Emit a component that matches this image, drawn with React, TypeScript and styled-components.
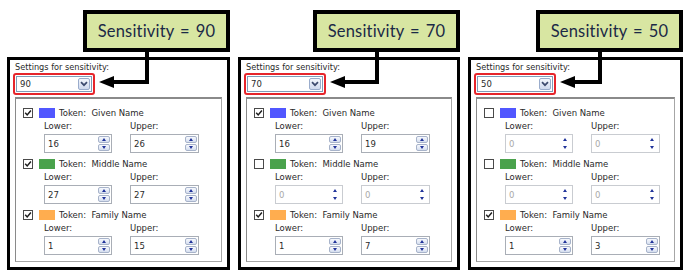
import React from 'react';
import styled, { createGlobalStyle } from 'styled-components';

type Token = { name: string; color: string; checked: boolean; lower: number; upper: number };
type Setting = { value: number; width: number; tokens: Token[] };

const BLUE = '#5157ff';
const GREEN = '#4aa24c';
const ORANGE = '#ffad4f';

const data: Setting[] = [
  {
    value: 90,
    width: 223,
    tokens: [
      { name: 'Given Name', color: BLUE, checked: true, lower: 16, upper: 26 },
      { name: 'Middle Name', color: GREEN, checked: true, lower: 27, upper: 27 },
      { name: 'Family Name', color: ORANGE, checked: true, lower: 1, upper: 15 },
    ],
  },
  {
    value: 70,
    width: 222,
    tokens: [
      { name: 'Given Name', color: BLUE, checked: true, lower: 16, upper: 19 },
      { name: 'Middle Name', color: GREEN, checked: false, lower: 0, upper: 0 },
      { name: 'Family Name', color: ORANGE, checked: true, lower: 1, upper: 7 },
    ],
  },
  {
    value: 50,
    width: 215,
    tokens: [
      { name: 'Given Name', color: BLUE, checked: false, lower: 0, upper: 0 },
      { name: 'Middle Name', color: GREEN, checked: false, lower: 0, upper: 0 },
      { name: 'Family Name', color: ORANGE, checked: true, lower: 1, upper: 3 },
    ],
  },
];

const SpinField = ({ label, value, disabled }: { label: string; value: number; disabled: boolean }) => (
  <Field>
    <FieldLabel>{label}</FieldLabel>
    <SpinBox disabled={disabled}>
      <SpinValue>{value}</SpinValue>
      <SpinButtons>
        <SpinButton disabled={disabled}><TriUp /></SpinButton>
        <SpinButton disabled={disabled}><TriDown /></SpinButton>
      </SpinButtons>
    </SpinBox>
  </Field>
);

const TokenRow = ({ token }: { token: Token }) => (
  <Row>
    <RowHeader>
      <CheckBox>
        {token.checked && (
          <svg width="8" height="8" viewBox="0 0 8 8">
            <path d="M1.2 3.8 L3.2 5.9 L6.9 1.6" fill="none" stroke="#1d1d1d" strokeWidth="1.5" />
          </svg>
        )}
      </CheckBox>
      <Swatch color={token.color} />
      <TokenLabel>Token:&nbsp; {token.name}</TokenLabel>
    </RowHeader>
    <Fields>
      <SpinField label="Lower:" value={token.lower} disabled={!token.checked} />
      <SpinField label="Upper:" value={token.upper} disabled={!token.checked} />
    </Fields>
  </Row>
);

const App = () => (
  <>
    <GlobalStyle />
    <Page>
      {data.map((s) => (
        <Column key={s.value} width={s.width}>
          <Callout>Sensitivity = {s.value}</Callout>
          <Connector />
          <Panel>
            <Caption>Settings for sensitivity:</Caption>
            <Highlight>
              <Combo>
                <ComboValue>{s.value}</ComboValue>
                <ComboButton>
                  <svg width="8" height="6" viewBox="0 0 8 6">
                    <path d="M1 1.2 L4 4.2 L7 1.2" fill="none" stroke="#3c4a6e" strokeWidth="1.7" />
                  </svg>
                </ComboButton>
              </Combo>
            </Highlight>
            <GroupBox>
              {s.tokens.map((t) => (
                <TokenRow key={t.name} token={t} />
              ))}
            </GroupBox>
          </Panel>
        </Column>
      ))}
    </Page>
  </>
);

const GlobalStyle = createGlobalStyle`
  body {
    margin: 0;
    background: #fff;
    font-family: "DejaVu Sans", Verdana, sans-serif;
  }
`;

const Page = styled.div`
  display: flex;
  gap: 8px;
  padding: 10px 0 0 7px;
`;

const Column = styled.div<{ width: number }>`
  position: relative;
  display: flex;
  flex-direction: column;
  align-items: flex-end;
  width: ${({ width }) => width}px;
`;

const Callout = styled.div`
  box-sizing: border-box;
  width: 147px;
  height: 42px;
  border: 4px solid #000;
  background: #d8e6a2;
  display: flex;
  align-items: center;
  justify-content: center;
  font-family: Lato, "Open Sans", sans-serif;
  font-weight: 400;
  font-size: 16.5px;
  letter-spacing: 0.2px;
  word-spacing: 1.5px;
  color: #1b2946;
  padding-bottom: 1px;
`;

const Connector = styled.div`
  position: absolute;
  top: 42px;
  left: 107px;
  right: 81px;
  height: 28px;
  border-right: 4px solid #000;
  border-bottom: 4px solid #000;

  &::after {
    content: '';
    position: absolute;
    left: -15px;
    top: calc(100% - 4px);
    border-style: solid;
    border-width: 6px 15px 6px 0;
    border-color: transparent #000 transparent transparent;
  }
`;

const Panel = styled.div`
  box-sizing: border-box;
  align-self: stretch;
  margin-top: 5px;
  height: 213px;
  border: 3px solid #000;
  padding: 1px 3px 5px 3px;
  display: flex;
  flex-direction: column;
  font-size: 8.5px;
  color: #2a2a2a;
`;

const Caption = styled.div`
  height: 12px;
  line-height: 12px;
  padding-left: 2px;
  font-size: 8.2px;
`;

const Highlight = styled.div`
  box-sizing: border-box;
  width: 82px;
  height: 22px;
  border: 2px solid #e6252b;
  border-radius: 3px;
  padding: 1px;
`;

const Combo = styled.div`
  box-sizing: border-box;
  height: 16px;
  border: 1px solid #7f9db9;
  background: #fff;
  display: flex;
  align-items: center;
  padding-right: 1px;
`;

const ComboValue = styled.span`
  flex: 1;
  padding-left: 3px;
`;

const ComboButton = styled.span`
  box-sizing: border-box;
  width: 12px;
  height: 12px;
  border: 1px solid #9aaccc;
  border-radius: 2px;
  background: linear-gradient(#f3f6fc, #cfd9ee);
  display: flex;
  align-items: center;
  justify-content: center;
`;

const GroupBox = styled.div`
  margin: 2px 2px 0;
  flex: 1;
  border: 1px solid #a6a6a6;
  border-top: 2px solid #8a8a8a;
  border-left-color: #8a8a8a;
  padding: 8px 0 0 7px;
  display: flex;
  flex-direction: column;
  gap: 5px;
`;

const Row = styled.div`
  display: flex;
  flex-direction: column;
`;

const RowHeader = styled.div`
  height: 12px;
  display: flex;
  align-items: center;
`;

const CheckBox = styled.span`
  box-sizing: border-box;
  width: 10px;
  height: 10px;
  border: 1px solid #4a4a4a;
  background: #fff;
  display: flex;
  align-items: center;
  justify-content: center;
`;

const Swatch = styled.span<{ color: string }>`
  width: 16px;
  height: 10px;
  margin-left: 6px;
  background: ${({ color }) => color};
`;

const TokenLabel = styled.span`
  margin-left: 4px;
  white-space: nowrap;
`;

const Fields = styled.div`
  display: grid;
  grid-template-columns: 68px 69px;
  column-gap: 18px;
  margin-left: 21px;
`;

const Field = styled.div`
  display: flex;
  flex-direction: column;
`;

const FieldLabel = styled.div`
  height: 14px;
  line-height: 14px;
`;

const SpinBox = styled.div<{ disabled: boolean }>`
  box-sizing: border-box;
  margin-top: 1px;
  height: 19px;
  border: 1px solid ${({ disabled }) => (disabled ? '#c9ccd1' : '#a9aeb6')};
  background: #fff;
  color: ${({ disabled }) => (disabled ? '#a9a9a9' : '#2a2a2a')};
  display: flex;
  align-items: center;
  padding-right: 1px;
`;

const SpinValue = styled.span`
  flex: 1;
  padding-left: 3px;
`;

const SpinButtons = styled.span`
  display: flex;
  flex-direction: column;
  gap: 1px;
`;

const SpinButton = styled.span<{ disabled: boolean }>`
  box-sizing: border-box;
  width: 12px;
  height: 7px;
  display: flex;
  align-items: center;
  justify-content: center;
  border: 1px solid ${({ disabled }) => (disabled ? 'transparent' : '#a7b3ca')};
  border-radius: 2px;
  background: ${({ disabled }) => (disabled ? 'transparent' : 'linear-gradient(#f7f9fd, #d5deef)')};
`;

const TriUp = styled.span`
  width: 0;
  height: 0;
  border-left: 2.5px solid transparent;
  border-right: 2.5px solid transparent;
  border-bottom: 3px solid #20339a;
`;

const TriDown = styled.span`
  width: 0;
  height: 0;
  border-left: 2.5px solid transparent;
  border-right: 2.5px solid transparent;
  border-top: 3px solid #20339a;
`;

export default App;
